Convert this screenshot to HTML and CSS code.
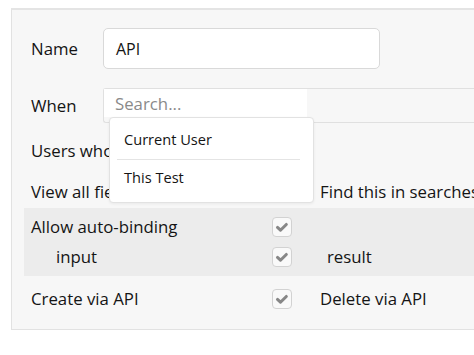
FILE: index.html
```html
<!DOCTYPE html>
<html>
<head>
<meta charset="utf-8">
<link rel="stylesheet" href="styles.css">
</head>
<body>
<div class="panel">
  <div class="row name-row">
    <div class="label">Name</div>
    <div class="text-input">API</div>
  </div>
  <div class="row when-row">
    <div class="label">When</div>
    <div class="when-box">
      <div class="search">Search...</div>
      <div class="dropdown">
        <div class="opt">Current User</div>
        <div class="sep"></div>
        <div class="opt">This Test</div>
      </div>
    </div>
  </div>
  <div class="row line users-row">
    <div class="label">Users who can see this</div>
  </div>
  <div class="row line view-row">
    <div class="col-left">View all fields</div>
    <div class="col-check"></div>
    <div class="col-right">Find this in searches:</div>
  </div>
  <div class="band">
    <div class="row line">
      <div class="col-left">Allow auto-binding</div>
      <div class="col-check"><span class="cb"><svg viewBox="0 0 20 20"><path d="M5 10.5 L8.3 13.6 L14.8 7.2"/></svg></span></div>
      <div class="col-right"></div>
    </div>
    <div class="row line">
      <div class="col-left indent">input</div>
      <div class="col-check"><span class="cb"><svg viewBox="0 0 20 20"><path d="M5 10.5 L8.3 13.6 L14.8 7.2"/></svg></span></div>
      <div class="col-right indent2">result</div>
    </div>
  </div>
  <div class="row line create-row">
    <div class="col-left">Create via API</div>
    <div class="col-check"><span class="cb"><svg viewBox="0 0 20 20"><path d="M5 10.5 L8.3 13.6 L14.8 7.2"/></svg></span></div>
    <div class="col-right">Delete via API</div>
  </div>
</div>
</body>
</html>
```
FILE: styles.css
```css
html, body {
  margin: 0;
  padding: 0;
  background: #ffffff;
  overflow: hidden;
  width: 474px;
  height: 355px;
}
body {
  font-family: "Open Sans", "Noto Sans", sans-serif;
  font-size: 16.8px;
  color: #141414;
}
.panel {
  margin: 8px 0 0 11px;
  width: 540px;
  background: #f7f7f7;
  border: 1px solid #e2e2e2;
  border-top: 2px solid #e4e4e4;
  padding: 18px 0 15px 0;
  box-sizing: border-box;
}
.row {
  display: flex;
  align-items: center;
}
.label {
  width: 72px;
  padding-left: 19px;
  flex: none;
  white-space: nowrap;
}
.name-row {
  height: 41px;
}
.text-input {
  width: 277px;
  height: 41px;
  box-sizing: border-box;
  background: #fff;
  border: 1px solid #d9d9d9;
  border-radius: 5px;
  padding-left: 12px;
  line-height: 40px;
  font-size: 16px;
}
.when-row {
  margin-top: 19px;
  height: 35px;
  align-items: flex-start;
}
.when-row .label {
  line-height: 35px;
}
.when-box {
  position: relative;
  flex: 1;
  height: 35px;
  box-sizing: border-box;
  border: 1px solid #e0e0e0;
  border-right: none;
  border-radius: 3px 0 0 3px;
}
.search {
  width: 203px;
  height: 28px;
  background: #fff;
  color: #8a8a8a;
  padding-left: 11px;
  box-sizing: border-box;
  line-height: 30px;
}
.dropdown {
  position: absolute;
  left: 5px;
  top: 28px;
  width: 205px;
  height: 86px;
  box-sizing: border-box;
  background: #fff;
  border: 1px solid #e2e2e2;
  border-radius: 4px;
  box-shadow: 0 1px 3px rgba(0,0,0,0.06);
  padding: 7px 0 0 0;
  font-size: 14.6px;
  z-index: 5;
}
.opt {
  height: 28px;
  line-height: 28px;
  padding-left: 14px;
}
.sep {
  margin: 6px 13px 3px 7px;
  height: 1px;
  background: #e4e4e4;
}
.line {
  height: 30px;
  line-height: 30px;
  white-space: nowrap;
}
.users-row {
  margin-top: 13px;
}
.users-row .label {
  width: auto;
}
.view-row {
  margin-top: 11px;
}
.col-left {
  width: 260px;
  padding-left: 19px;
  box-sizing: border-box;
  flex: none;
}
.band .col-left {
  padding-left: 7px;
  width: 248px;
}
.indent {
  padding-left: 32px !important;
}
.col-check {
  width: 48px;
  flex: none;
  display: flex;
  align-items: center;
}
.col-right {
  flex: 1;
}
.indent2 {
  padding-left: 7px;
}
.band {
  margin: 1px 0 0 12px;
  background: #ececec;
  padding: 4px 0;
}
.create-row {
  margin-top: 8px;
}
.cb {
  display: block;
  width: 20px;
  height: 20px;
  box-sizing: border-box;
  border: 1px solid #d2d2d2;
  border-radius: 4px;
  background: #f9f9f9;
}
.cb svg {
  display: block;
  width: 18px;
  height: 18px;
}
.cb path {
  fill: none;
  stroke: #878787;
  stroke-width: 3.4;
  stroke-linecap: round;
  stroke-linejoin: round;
}
```
